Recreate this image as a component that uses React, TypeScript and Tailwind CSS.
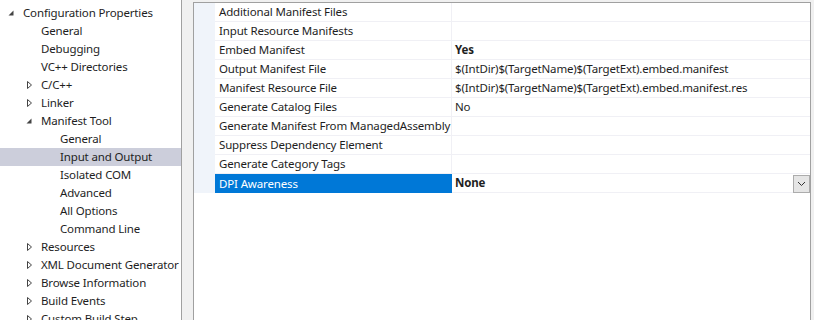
import React from 'react';

type TreeItem = { label: string; level: number; state?: 'open' | 'closed'; selected?: boolean };

const tree: TreeItem[] = [
    { label: 'Configuration Properties', level: 0, state: 'open' },
    { label: 'General', level: 1 },
    { label: 'Debugging', level: 1 },
    { label: 'VC++ Directories', level: 1 },
    { label: 'C/C++', level: 1, state: 'closed' },
    { label: 'Linker', level: 1, state: 'closed' },
    { label: 'Manifest Tool', level: 1, state: 'open' },
    { label: 'General', level: 2 },
    { label: 'Input and Output', level: 2, selected: true },
    { label: 'Isolated COM', level: 2 },
    { label: 'Advanced', level: 2 },
    { label: 'All Options', level: 2 },
    { label: 'Command Line', level: 2 },
    { label: 'Resources', level: 1, state: 'closed' },
    { label: 'XML Document Generator', level: 1, state: 'closed' },
    { label: 'Browse Information', level: 1, state: 'closed' },
    { label: 'Build Events', level: 1, state: 'closed' },
    { label: 'Custom Build Step', level: 1, state: 'closed' },
];

const props: { name: string; value: string; bold?: boolean }[] = [
    { name: 'Additional Manifest Files', value: '' },
    { name: 'Input Resource Manifests', value: '' },
    { name: 'Embed Manifest', value: 'Yes', bold: true },
    { name: 'Output Manifest File', value: '$(IntDir)$(TargetName)$(TargetExt).embed.manifest' },
    { name: 'Manifest Resource File', value: '$(IntDir)$(TargetName)$(TargetExt).embed.manifest.res' },
    { name: 'Generate Catalog Files', value: 'No' },
    { name: 'Generate Manifest From ManagedAssembly', value: '' },
    { name: 'Suppress Dependency Element', value: '' },
    { name: 'Generate Category Tags', value: '' },
];

const indent = ['pl-[7px]', 'pl-[25px]', 'pl-[60px]'];

function Arrow({ state }: { state?: 'open' | 'closed' }) {
    if (state === 'open') {
        return (
            <svg width="8" height="8" viewBox="0 0 8 8" className="shrink-0">
                <path d="M6.5 1.5 L6.5 6.5 L1.5 6.5 Z" fill="#444" />
            </svg>
        );
    }
    return (
        <svg width="8" height="10" viewBox="0 0 8 10" className="shrink-0">
            <path d="M2.5 1.5 L6.5 5 L2.5 8.5 Z" fill="none" stroke="#444" strokeWidth="1" />
        </svg>
    );
}

export default function App() {
    return (
        <div
            className="flex h-[320px] w-[814px] overflow-hidden bg-[#f0f0f0] text-[11.5px] tracking-[-0.15px] text-[#1e1e1e]"
            style={{ fontFamily: '"Segoe UI", "Noto Sans", sans-serif' }}
        >
            {/* Tree */}
            <div className="w-[182px] shrink-0 border-r border-[#a0a0a0] bg-white pt-[4px]">
                {tree.map((t, i) => (
                    <div
                        key={i}
                        className={`flex h-[18px] items-center whitespace-nowrap ${indent[t.level]} ${t.selected ? 'bg-[#cccedb]' : ''}`}
                    >
                        {t.level < 2 && (
                            <span className="flex w-[16px] shrink-0 items-center">
                                {t.state && <Arrow state={t.state} />}
                            </span>
                        )}
                        <span>{t.label}</span>
                    </div>
                ))}
            </div>

            {/* Property grid */}
            <div className="ml-[11px] mt-[2px] w-[618px] shrink-0 border-l border-r border-t border-[#a0a0a0] bg-white">
                {props.map((p, i) => (
                    <div key={i} className="flex h-[19px]">
                        <div className="w-[21px] shrink-0 bg-[#f0f4fa]" />
                        <div className="flex w-[237px] shrink-0 items-center overflow-hidden border-b border-r border-[#f0f0f5] pl-[4px] whitespace-nowrap">
                            {p.name}
                        </div>
                        <div className={`flex flex-1 items-center border-b border-[#f0f0f5] pl-[3px] whitespace-nowrap ${p.bold ? 'font-bold' : ''}`}>
                            {p.value}
                        </div>
                    </div>
                ))}
                <div className="flex h-[19px]">
                    <div className="w-[21px] shrink-0 bg-[#f0f4fa]" />
                    <div className="flex w-[237px] shrink-0 items-center bg-[#0078d7] pl-[4px] text-white">
                        DPI Awareness
                    </div>
                    <div className="flex flex-1 items-center border-b border-[#f0f0f5] pl-[3px] font-bold">
                        <span className="flex-1">None</span>
                        <div className="mb-[-1px] flex h-[18px] w-[17px] items-center justify-center border border-[#acacac] bg-[#e5e5e5]">
                            <svg width="9" height="6" viewBox="0 0 9 6">
                                <path d="M1 1 L4.5 4.5 L8 1" fill="none" stroke="#333" strokeWidth="1" />
                            </svg>
                        </div>
                    </div>
                </div>
            </div>
        </div>
    );
}
